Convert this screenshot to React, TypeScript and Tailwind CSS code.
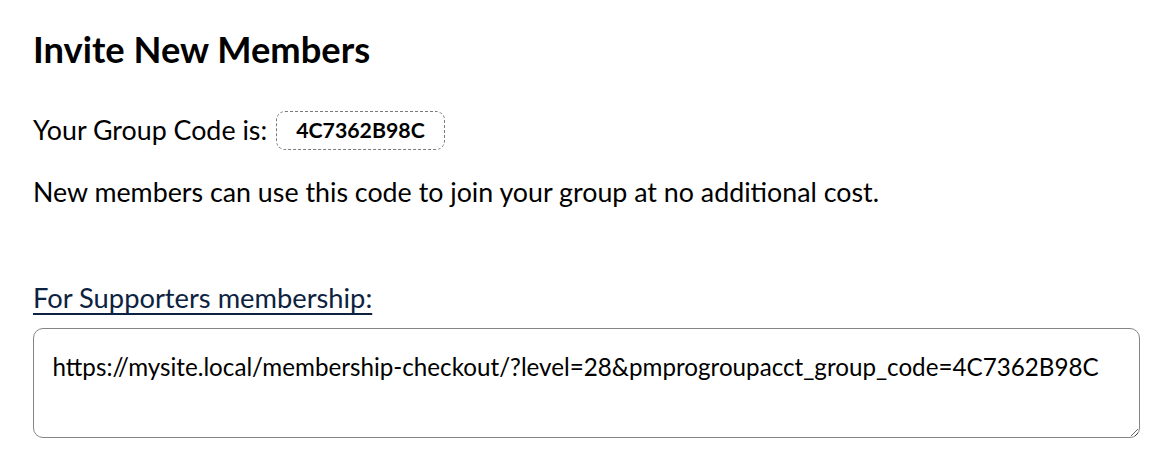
import React from 'react';

const groupCode = '4C7362B98C';
const checkoutUrl = `https://mysite.local/membership-checkout/?level=28&pmprogroupacct_group_code=${groupCode}`;

const App: React.FC = () => {
  return (
    <div className="min-h-[476px] bg-white px-[33px] pt-[27px] text-black [font-family:Lato,'Open_Sans',sans-serif]">
      <h2 className="text-[36.3px] font-bold leading-[44px]">Invite New Members</h2>

      {/* Gruppencode */}
      <div className="mt-[39px] flex items-center text-[26.8px] leading-[40px]">
        <span>Your Group Code is:</span>
        <span className="ml-[9px] inline-flex h-[39px] items-center rounded-[9px] border border-dashed border-[#7a7a7a] px-[19px] text-[21.3px] font-bold">
          {groupCode}
        </span>
      </div>

      <p className="mt-[22px] text-[26.8px] leading-[40px]">
        New members can use this code to join your group at no additional cost.
      </p>

      <div className="mt-[66px]">
        <a href="#" className="text-[27.3px] leading-[40px] text-[#0d2240] underline decoration-[1.5px] underline-offset-[5px]">
          For Supporters membership:
        </a>
        <textarea
          readOnly
          value={checkoutUrl}
          className="mt-[10px] block h-[110px] w-[1107px] resize rounded-[10px] border-[1.5px] border-[#858585] px-[18.5px] py-[20px] text-[24.2px] leading-[36px] text-black outline-none"
        />
      </div>
    </div>
  );
};

export default App;
